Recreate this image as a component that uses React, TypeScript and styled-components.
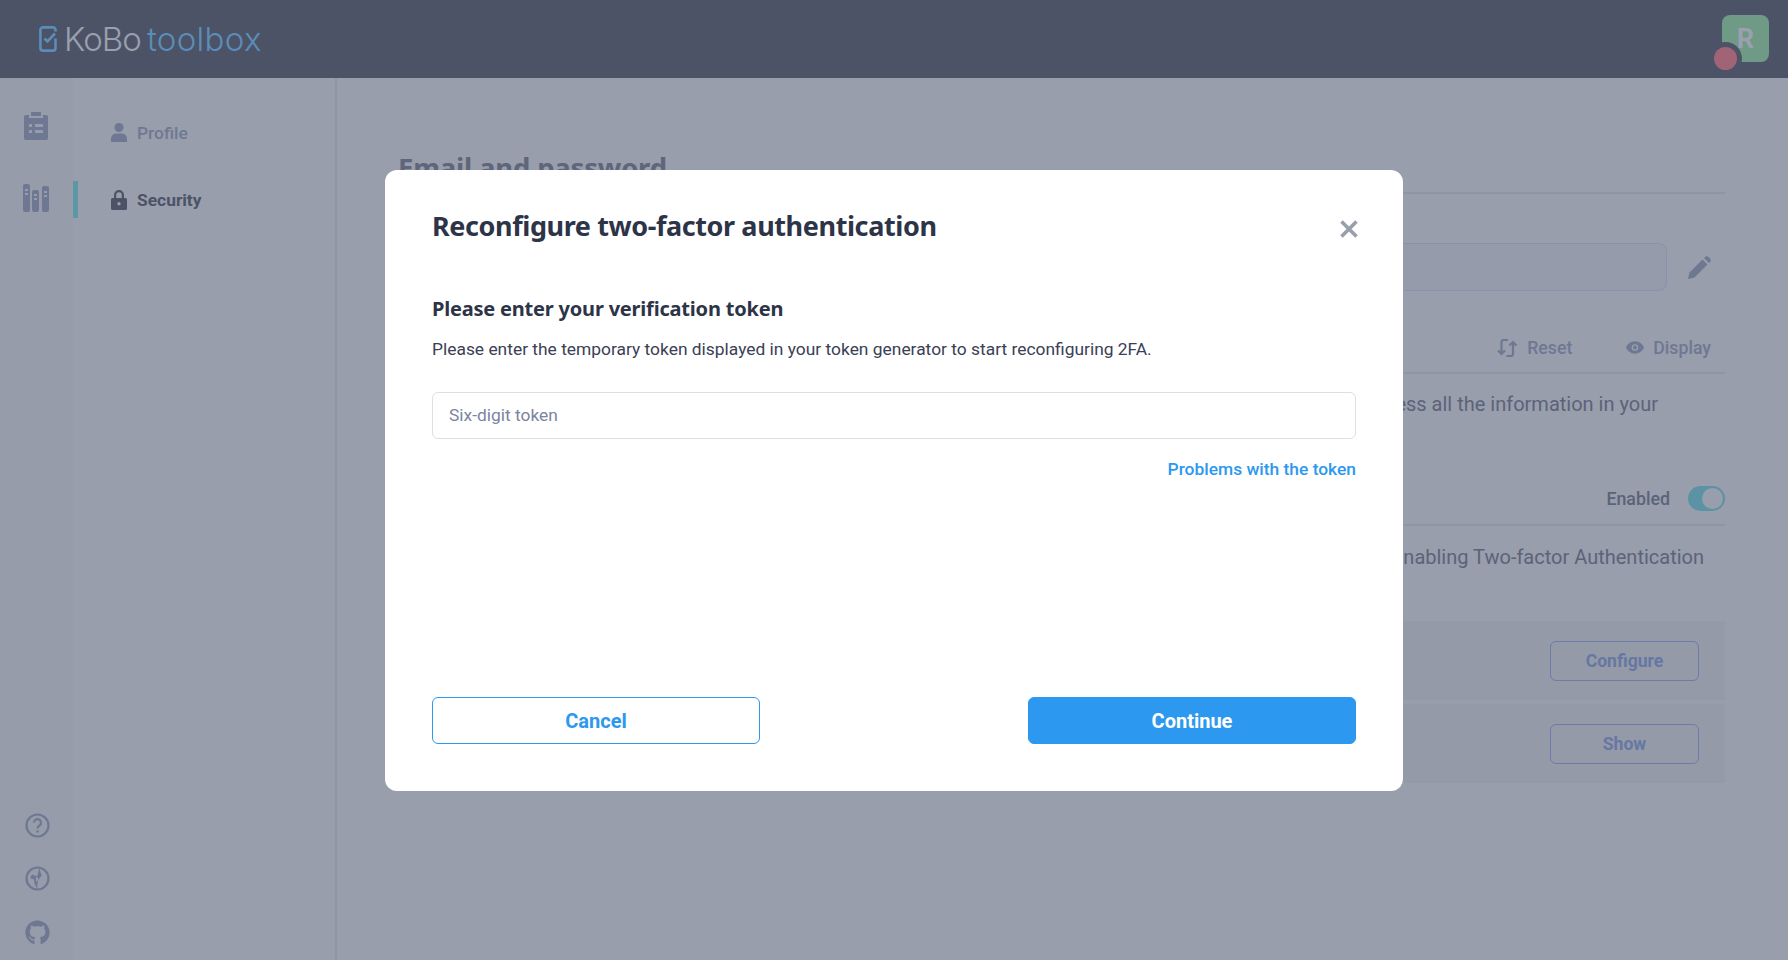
import styled, { createGlobalStyle } from "styled-components";
import { FaGithub } from "react-icons/fa";

const GlobalStyle = createGlobalStyle`
  html, body {
    margin: 0;
    padding: 0;
    height: 100%;
    overflow: hidden;
    font-family: Roboto, "Liberation Sans", sans-serif;
  }
  * {
    box-sizing: border-box;
  }
`;

const Page = styled.div`
  width: 1788px;
  height: 960px;
  display: flex;
  flex-direction: column;
  background: #989eac;
`;

const Header = styled.header`
  height: 78px;
  flex: none;
  display: flex;
  align-items: center;
  justify-content: space-between;
  padding: 0 19px 1px 39px;
  background: #4d5367;
`;

const Logo = styled.div`
  display: flex;
  align-items: center;
  font-family: Inter, sans-serif;
  font-weight: 350;
  font-size: 33px;
  line-height: 40px;
`;

const LogoKobo = styled.span`
  margin-left: 7px;
  letter-spacing: -0.9px;
  color: #9aa0ae;
`;

const LogoToolbox = styled.span`
  margin-left: 6px;
  letter-spacing: 0.3px;
  color: #5a8db8;
`;

const Avatar = styled.div`
  position: relative;
  width: 47px;
  height: 47px;
  display: flex;
  align-items: center;
  justify-content: center;
  border-radius: 8px;
  background: #6f9a85;
  color: #9aa0ae;
  font-size: 27px;
  font-weight: 700;
`;

const AvatarBadge = styled.span`
  position: absolute;
  left: -8px;
  top: 32px;
  width: 23px;
  height: 23px;
  border-radius: 50%;
  background: #a06476;
  box-shadow: 0 0 0 5px #4d5367;
  clip-path: circle(17px at 50% 50%);
`;

const Body = styled.div`
  flex: 1;
  display: flex;
  min-height: 0;
`;

const IconRail = styled.nav`
  width: 73px;
  flex: none;
  display: flex;
  flex-direction: column;
  padding-bottom: 1px;
  background: #969ca9;
  color: #6f7892;
`;

const RailIcon = styled.div`
  height: 72px;
  display: flex;
  align-items: center;
  justify-content: center;
  padding-right: 2px;
`;

const FirstRailIcon = styled(RailIcon)`
  margin-top: 12px;
`;

const RailSpacer = styled.div`
  flex: 1;
`;

const RailFooterIcon = styled.div`
  height: 53.5px;
  display: flex;
  align-items: center;
  justify-content: center;
  padding-left: 1px;
`;

const SubNav = styled.nav`
  width: 264px;
  flex: none;
  padding-top: 21px;
  border-right: 2px solid #8f95a4;
`;

const SubNavItem = styled.div<{ $active?: boolean }>`
  position: relative;
  height: 67px;
  display: flex;
  align-items: center;
  gap: 10px;
  padding-left: 38px;
  font-size: 17.4px;
  font-weight: ${(p) => (p.$active ? 700 : 500)};
  color: ${(p) => (p.$active ? "#4d5367" : "#6f7892")};

  ${(p) =>
    p.$active &&
    `
    &::before {
      content: "";
      position: absolute;
      left: 0;
      top: 15px;
      width: 5px;
      height: 37px;
      background: #5c97a5;
    }
  `}
`;

const Content = styled.main`
  flex: 1;
  padding: 0 63px 0 61px;
`;

const SectionTitle = styled.div`
  height: 116px;
  padding-top: 71px;
  border-bottom: 2px solid #8f95a4;
  font-family: "Noto Sans", sans-serif;
  font-size: 27.5px;
  line-height: 38px;
  font-weight: 700;
  letter-spacing: -0.2px;
  color: #5f667b;
`;

const FieldRow = styled.div`
  margin-top: 49px;
  height: 48px;
  display: flex;
  align-items: center;
  color: #6f7892;
`;

const FieldBox = styled.div`
  width: 1269px;
  height: 48px;
  background: #969bab;
  border: 1.5px solid #8a91a8;
  border-radius: 8px;
`;

const FieldIcon = styled.div`
  margin-left: 21px;
  display: flex;
`;

const ActionsRow = styled.div`
  height: 83px;
  padding-top: 32px;
  padding-right: 14px;
  display: flex;
  align-items: center;
  justify-content: flex-end;
  gap: 54px;
  border-bottom: 2px solid #8f95a4;
`;

const ActionItem = styled.div`
  display: flex;
  align-items: center;
  gap: 9px;
  font-size: 17.7px;
  font-weight: 500;
  color: #6f7892;
`;

const SectionText = styled.p<{ $inset: number }>`
  margin: 0;
  padding-right: ${(p) => p.$inset}px;
  text-align: right;
  white-space: nowrap;
  font-size: 20px;
  line-height: 28px;
  color: #5c6379;
`;

const ApiText = styled(SectionText)`
  margin-top: 16px;
`;

const ToggleRow = styled.div`
  margin-top: 60px;
  height: 48px;
  padding-bottom: 5px;
  display: flex;
  align-items: center;
  justify-content: flex-end;
  gap: 18px;
  border-bottom: 2px solid #8f95a4;
  font-size: 17.8px;
  font-weight: 500;
  color: #5c6379;
`;

const Toggle = styled.div`
  position: relative;
  width: 37px;
  height: 25px;
  border-radius: 13px;
  background: #5b93a5;

  &::after {
    content: "";
    position: absolute;
    right: 2px;
    top: 2px;
    width: 21px;
    height: 21px;
    border-radius: 50%;
    background: #989eac;
  }
`;

const TwoFactorText = styled(SectionText)`
  margin-top: 17px;
`;

const Cards = styled.div`
  margin-top: 50px;
  display: flex;
  flex-direction: column;
  gap: 4px;
`;

const Card = styled.div`
  height: 79px;
  display: flex;
  align-items: center;
  justify-content: flex-end;
  padding-right: 26px;
  background: #949aa8;
`;

const CardButton = styled.div`
  width: 149px;
  height: 40px;
  display: flex;
  align-items: center;
  justify-content: center;
  border: 1.5px solid #6c7ba8;
  border-radius: 6px;
  font-size: 17.6px;
  font-weight: 700;
  color: #6677a3;
`;

const Overlay = styled.div`
  position: fixed;
  inset: 0;
  display: flex;
  align-items: center;
  justify-content: center;
`;

const Modal = styled.div`
  width: 1018px;
  height: 621px;
  display: flex;
  flex-direction: column;
  padding: 0 47px 47px;
  border-radius: 12px;
  background: #ffffff;
`;

const ModalHeader = styled.div`
  height: 124px;
  padding-top: 36px;
  display: flex;
  justify-content: space-between;
`;

const ModalTitle = styled.h1`
  margin: 0;
  font-family: "Noto Sans", sans-serif;
  font-size: 27px;
  line-height: 40px;
  font-weight: 700;
  letter-spacing: -0.4px;
  color: #2d3448;
`;

const CloseButton = styled.div`
  margin: 14px -2px 0 0;
  display: flex;
  color: #989eac;
`;

const ModalHeading = styled.h2`
  margin: 0;
  font-family: "Noto Sans", sans-serif;
  font-size: 20px;
  line-height: 30px;
  font-weight: 700;
  letter-spacing: -0.2px;
  color: #2d3448;
`;

const ModalText = styled.p`
  margin: 11px 0 0;
  font-size: 17.4px;
  line-height: 28px;
  color: #3a4055;
`;

const TokenInput = styled.input`
  width: 100%;
  height: 47px;
  margin-top: 29px;
  padding: 0 16px;
  border: 1.5px solid #dcdfe6;
  border-radius: 6px;
  outline: none;
  font-family: Roboto, sans-serif;
  font-size: 17.4px;

  &::placeholder {
    color: #7a84a0;
    opacity: 1;
  }
`;

const ProblemLink = styled.a`
  align-self: flex-end;
  margin-top: 18px;
  font-size: 17.4px;
  line-height: 24px;
  font-weight: 500;
  color: #2c98f0;
`;

const ModalFooter = styled.div`
  margin-top: auto;
  display: flex;
  justify-content: space-between;
`;

const ModalButton = styled.button<{ $primary?: boolean }>`
  width: 328px;
  height: 47px;
  padding: 2px 0 0;
  border: 1.5px solid #2c98f0;
  border-radius: 6px;
  background: ${(p) => (p.$primary ? "#2c98f0" : "#ffffff")};
  color: ${(p) => (p.$primary ? "#ffffff" : "#2c98f0")};
  font-family: Roboto, sans-serif;
  font-size: 20px;
  font-weight: 700;
`;

const LogoMark = () => (
  <svg width="18" height="26" viewBox="0 0 18 26" fill="none" stroke="#5a8db8" strokeWidth="2.6">
    <path d="M16.5 5.5V4a2.6 2.6 0 0 0-2.6-2.6H4A2.6 2.6 0 0 0 1.4 4v18A2.6 2.6 0 0 0 4 24.6h9.9a2.6 2.6 0 0 0 2.6-2.6v-9.5" />
    <path d="M5.5 12.5l3 3 7.5-8" />
  </svg>
);

const ClipboardIcon = () => (
  <svg width="24" height="28" viewBox="0 0 24 28" fill="currentColor">
    <path d="M7 0h10v4H7z" />
    <path
      fillRule="evenodd"
      d="M2 3h3v3h14V3h3a2 2 0 0 1 2 2v21a2 2 0 0 1-2 2H2a2 2 0 0 1-2-2V5a2 2 0 0 1 2-2zm3 9v3h3v-3zm6 0v3h8v-3zm-6 6v3h3v-3zm6 0v3h8v-3z"
    />
  </svg>
);

const LibraryIcon = () => (
  <svg width="26" height="28" viewBox="0 0 26 28" fill="currentColor">
    <path
      fillRule="evenodd"
      d="M2 0h3a2 2 0 0 1 2 2v24a2 2 0 0 1-2 2H2a2 2 0 0 1-2-2V2a2 2 0 0 1 2-2zm0 5v2h3V5zm0 4v2h3V9z"
    />
    <path
      fillRule="evenodd"
      d="M11 6h3a2 2 0 0 1 2 2v18a2 2 0 0 1-2 2h-3a2 2 0 0 1-2-2V8a2 2 0 0 1 2-2zm0 4v2h3v-2zm0 4v2h3v-2z"
    />
    <path
      fillRule="evenodd"
      d="M21 2h3a2 2 0 0 1 2 2v22a2 2 0 0 1-2 2h-3a2 2 0 0 1-2-2V4a2 2 0 0 1 2-2zm0 5v2h3V7zm0 4v2h3v-2z"
    />
  </svg>
);

const HelpIcon = () => (
  <svg width="25" height="25" viewBox="0 0 25 25" fill="none" stroke="currentColor" strokeWidth="2.2">
    <circle cx="12.5" cy="12.5" r="11" />
    <path d="M9 9.5a3.5 3.5 0 1 1 5.5 3c-1.4.9-2 1.5-2 3" strokeWidth="2.2" />
    <circle cx="12.5" cy="18.5" r="1.3" fill="currentColor" stroke="none" />
  </svg>
);

const GlobeIcon = () => (
  <svg width="25" height="25" viewBox="0 0 25 25" fill="none" stroke="currentColor" strokeWidth="2.2">
    <circle cx="12.5" cy="12.5" r="11" />
    <path d="M14.500 2l1.500 6 1 1-4 5.500-1 8-2.500-5-.5-4-4-1.500 2-3.500 5 2z" fill="currentColor" stroke="none" />
    <path d="M11 11l2.500 1-1.500 4-1-1.500z" fill="#969ca9" stroke="none" />
  </svg>
);

const PersonIcon = () => (
  <svg width="16" height="19" viewBox="0 0 16 19" fill="currentColor">
    <circle cx="8" cy="4.5" r="4.5" />
    <path d="M0 19v-3c0-3.3 2.7-5.5 5-5.5h6c2.3 0 5 2.200 5 5.500v3z" />
  </svg>
);

const LockIcon = () => (
  <svg width="16" height="20" viewBox="0 0 16 20" fill="currentColor">
    <path
      fillRule="evenodd"
      d="M3 8V5a5 5 0 0 1 10 0v3h1.500A1.500 1.500 0 0 1 16 9.500v9a1.500 1.500 0 0 1-1.500 1.500h-13A1.500 1.500 0 0 1 0 18.500v-9A1.500 1.500 0 0 1 1.500 8zm2.200 0h5.600V5a2.800 2.800 0 0 0-5.600 0zM8 12a1.700 1.700 0 1 0 0 3.400A1.700 1.700 0 0 0 8 12z"
    />
  </svg>
);

const PencilIcon = () => (
  <svg width="23" height="23" viewBox="0 0 23 23" fill="currentColor">
    <path d="M0 23l1.500-6.500L14.500 3.500l5 5L6.500 21.500z" />
    <path d="M16 2l1-1a2.500 2.500 0 0 1 3.500 0l1.500 1.500a2.500 2.500 0 0 1 0 3.500l-1 1z" />
  </svg>
);

const ResetIcon = () => (
  <svg width="21" height="18" viewBox="0 0 21 18" fill="none" stroke="currentColor" strokeWidth="2.2">
    <path d="M4.500 15V3a2 2 0 0 1 2-2H11" />
    <path d="M1 11.500l3.500 3.500L8 11.500" />
    <path d="M16 3v12a2 2 0 0 1-2 2H9.500" />
    <path d="M12.500 6.500L16 3l3.500 3.500" />
  </svg>
);

const EyeIcon = () => (
  <svg width="18" height="13" viewBox="0 0 19 13" fill="currentColor">
    <path
      fillRule="evenodd"
      d="M9.500 0C14 0 17.500 3 19 6.500 17.500 10 14 13 9.500 13S1.500 10 0 6.500C1.500 3 5 0 9.500 0zm0 3a3.500 3.500 0 1 0 0 7 3.500 3.500 0 0 0 0-7z"
    />
    <circle cx="9.500" cy="6.500" r="2" />
  </svg>
);

const CloseIcon = () => (
  <svg width="18" height="18" viewBox="0 0 18 18" fill="none" stroke="currentColor" strokeWidth="3.600">
    <path d="M1.500 1.500l15 15M16.500 1.500l-15 15" />
  </svg>
);

export default function App() {
  return (
    <>
      <GlobalStyle />
      <Page>
        <Header>
          <Logo>
            <LogoMark />
            <LogoKobo>KoBo</LogoKobo>
            <LogoToolbox>toolbox</LogoToolbox>
          </Logo>
          <Avatar>
            R
            <AvatarBadge />
          </Avatar>
        </Header>
        <Body>
          <IconRail>
            <FirstRailIcon>
              <ClipboardIcon />
            </FirstRailIcon>
            <RailIcon>
              <LibraryIcon />
            </RailIcon>
            <RailSpacer />
            <RailFooterIcon>
              <HelpIcon />
            </RailFooterIcon>
            <RailFooterIcon>
              <GlobeIcon />
            </RailFooterIcon>
            <RailFooterIcon>
              <FaGithub size={25} />
            </RailFooterIcon>
          </IconRail>
          <SubNav>
            <SubNavItem>
              <PersonIcon />
              Profile
            </SubNavItem>
            <SubNavItem $active>
              <LockIcon />
              Security
            </SubNavItem>
          </SubNav>
          <Content>
            <SectionTitle>Email and password</SectionTitle>
            <FieldRow>
              <FieldBox />
              <FieldIcon>
                <PencilIcon />
              </FieldIcon>
            </FieldRow>
            <ActionsRow>
              <ActionItem>
                <ResetIcon />
                Reset
              </ActionItem>
              <ActionItem>
                <EyeIcon />
                Display
              </ActionItem>
            </ActionsRow>
            <ApiText $inset={67}>
              Your API token lets external tools access all the information in your
            </ApiText>
            <ToggleRow>
              Enabled
              <Toggle />
            </ToggleRow>
            <TwoFactorText $inset={21}>
              Add an extra layer of security to your account by enabling Two-factor Authentication
            </TwoFactorText>
            <Cards>
              <Card>
                <CardButton>Configure</CardButton>
              </Card>
              <Card>
                <CardButton>Show</CardButton>
              </Card>
            </Cards>
          </Content>
        </Body>
      </Page>
      <Overlay>
        <Modal>
          <ModalHeader>
            <ModalTitle>Reconfigure two-factor authentication</ModalTitle>
            <CloseButton>
              <CloseIcon />
            </CloseButton>
          </ModalHeader>
          <ModalHeading>Please enter your verification token</ModalHeading>
          <ModalText>
            Please enter the temporary token displayed in your token generator to start
            reconfiguring 2FA.
          </ModalText>
          <TokenInput placeholder="Six-digit token" />
          <ProblemLink>Problems with the token</ProblemLink>
          <ModalFooter>
            <ModalButton>Cancel</ModalButton>
            <ModalButton $primary>Continue</ModalButton>
          </ModalFooter>
        </Modal>
      </Overlay>
    </>
  );
}
